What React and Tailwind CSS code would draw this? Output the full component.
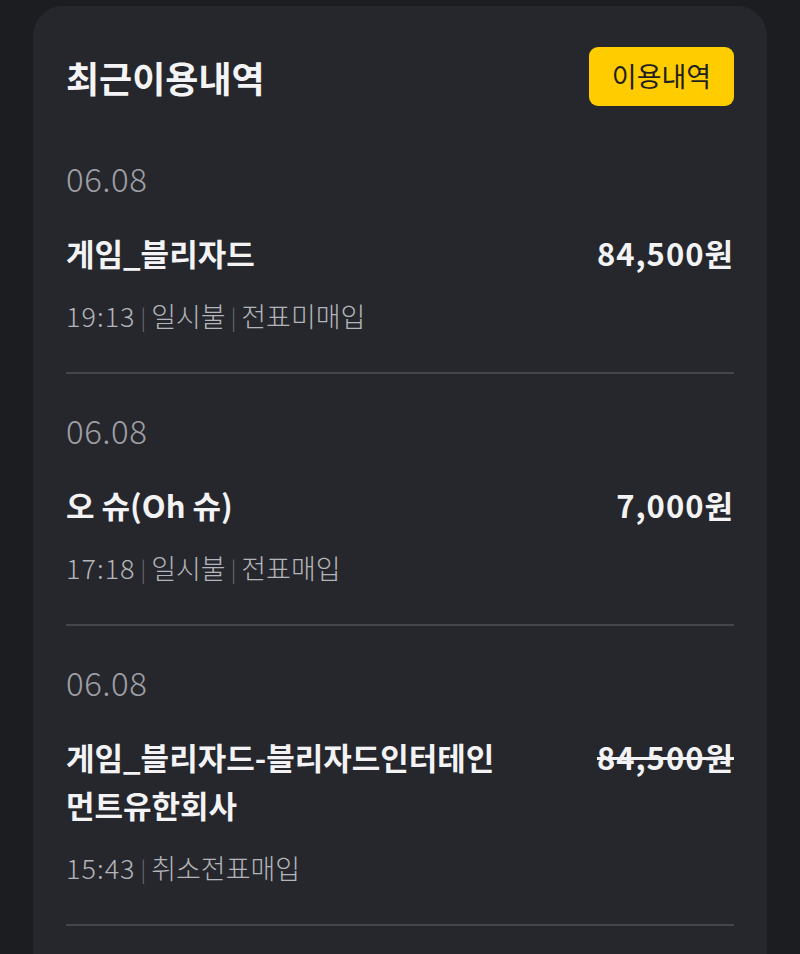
import React from 'react';

const items = [
  { date: '06.08', title: '게임_블리자드', amount: '84,500원', time: '19:13', tags: ['일시불', '전표미매입'] },
  { date: '06.08', title: '오 슈(Oh 슈)', amount: '7,000원', time: '17:18', tags: ['일시불', '전표매입'] },
  { date: '06.08', title: '게임_블리자드-블리자드인터테인먼트유한회사', amount: '84,500원', time: '15:43', tags: ['취소전표매입'], canceled: true },
];

const font = { fontFamily: '"Noto Sans CJK KR", "Noto Sans", sans-serif' };

function Item({ item }) {
  return (
    <li className="pt-[36px] pb-[38px] border-b-2 border-[#45464b]">
      <div className="text-[33px] leading-[40px] font-light tracking-[0.5px] text-[#9d9fa5]">{item.date}</div>
      <div className="mt-[31px] flex items-start justify-between">
        <div className="max-w-[440px] text-[31px] leading-[48px] font-bold text-[#f3f3f5] break-all">{item.title}</div>
        <div className={`shrink-0 text-[31px] leading-[48px] font-bold tracking-[1px] text-[#f3f3f5] ${item.canceled ? 'line-through decoration-[3px]' : ''}`}>
          {item.amount}
        </div>
      </div>
      <div className="mt-[21px] flex items-center text-[27px] leading-[36px] font-light text-[#b3b5ba]">
        <span className="tracking-[1px]">{item.time}</span>
        <>
          {item.tags.map((t) => (
            <React.Fragment key={t}>
              <span className="mx-[5px] text-[22px] text-[#6c6e74]">|</span>
              <span>{t}</span>
            </React.Fragment>
          ))}
        </>
      </div>
    </li>
  );
}

export default function App() {
  return (
    <div className="h-[954px] overflow-hidden bg-[#1c1d21] pt-[6px] px-[33px]" style={font}>
      <div className="rounded-t-[30px] bg-[#26272c] px-[33px] pt-[41px] min-h-[960px]">
        <div className="flex items-center justify-between mb-[16px]">
          <h2 className="text-[36px] leading-[44px] font-bold text-[#f4f4f6]">최근이용내역</h2>
          <button className="w-[145px] h-[59px] rounded-[9px] bg-[#ffcc00] text-[27px] text-[#1f1f1f]">이용내역</button>
        </div>
        <ul>
          {items.map((item, i) => (
            <Item key={i} item={item} />
          ))}
        </ul>
      </div>
    </div>
  );
}
